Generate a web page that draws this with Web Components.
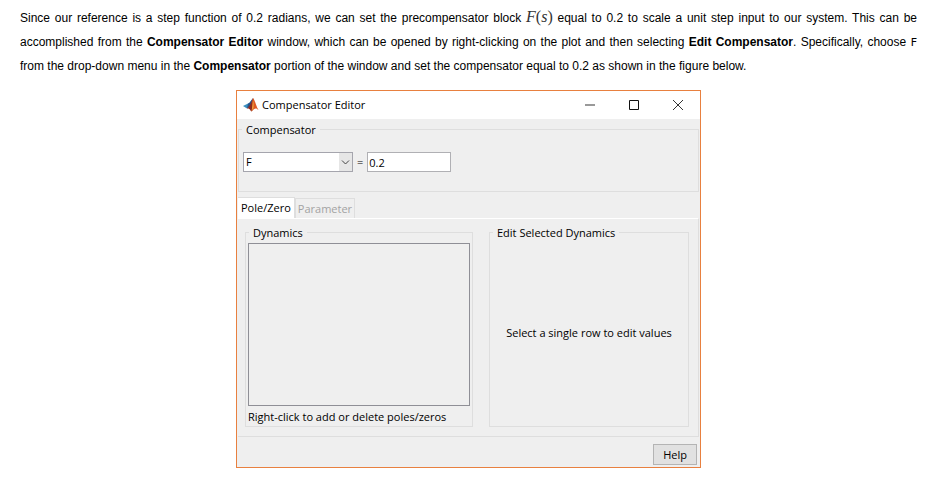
<!DOCTYPE html>
<html lang="en">
<head>
<meta charset="utf-8">
<title>Compensator Editor</title>
<style>
  body {
    margin: 0;
    padding: 6px 17px 24px 20px;
    background: #fff;
    color: #000;
    font-family: "Liberation Sans", Arial, sans-serif;
    font-size: 12px;
  }
</style>
</head>
<body>
<tutorial-text>
  Since our reference is a step function of 0.2 radians, we can set the precompensator block
  <math-term name="F" arg="s"></math-term>
  equal to 0.2 to scale a unit step input to our system. This can be accomplished from the
  <b>Compensator Editor</b> window, which can be opened by right-clicking on the plot and then
  selecting <b>Edit Compensator</b>. Specifically, choose <code-term>F</code-term> from the
  drop-down menu in the <b>Compensator</b> portion of the window and set the compensator equal
  to 0.2 as shown in the figure below.
</tutorial-text>

<app-window caption="Compensator Editor">
  <compensator-form></compensator-form>
  <tab-panel>
    <group-box label="Dynamics">
      <dynamics-list>Right-click to add or delete poles/zeros</dynamics-list>
    </group-box>
    <group-box label="Edit Selected Dynamics">
      <empty-message>Select a single row to edit values</empty-message>
    </group-box>
  </tab-panel>
  <push-button slot="footer">Help</push-button>
</app-window>

<script>
class BaseElement extends HTMLElement {
  constructor () {
    super()
    this.attachShadow({ mode: 'open' })
  }

  connectedCallback () {
    this.shadowRoot.innerHTML = this.template()
  }
}

class TutorialText extends BaseElement {
  template () {
    return `
      <style>
        :host { display: block; }
        p {
          margin: 0;
          line-height: 24px;
          text-align: justify;
        }
      </style>
      <p><slot></slot></p>
    `
  }
}

class MathTerm extends BaseElement {
  template () {
    return `
      <style>
        :host {
          font-family: "Liberation Serif", "Times New Roman", serif;
          font-size: 16px;
          line-height: 1;
          color: #333;
        }
      </style>
      <i>${this.getAttribute('name')}</i>(<i>${this.getAttribute('arg')}</i>)
    `.trim()
  }
}

class CodeTerm extends BaseElement {
  template () {
    return `
      <style>
        code {
          font-family: "DejaVu Sans Mono", Consolas, monospace;
          font-size: 11px;
          line-height: 1;
        }
      </style><code><slot></slot></code>`
  }
}

class AppWindow extends BaseElement {
  template () {
    return `
      <style>
        * { box-sizing: border-box; }
        :host {
          box-sizing: border-box;
          display: block;
          max-width: 465px;
          margin: 12px auto 0;
          border: 1px solid #e8803f;
          background: #efefef;
          font-family: "Open Sans", "Segoe UI", sans-serif;
          font-size: 11px;
          line-height: 16px;
        }
        header {
          display: flex;
          align-items: center;
          height: 28px;
          padding-left: 6px;
          background: #fff;
        }
        .logo {
          width: 16px;
          height: 16px;
          margin-right: 3px;
        }
        h1 {
          flex: 1;
          margin: 0;
          font-size: 11px;
          font-weight: normal;
        }
        header button {
          display: flex;
          align-items: center;
          justify-content: center;
          width: 44px;
          height: 28px;
          padding: 0;
          border: 0;
          background: none;
        }
        footer {
          display: flex;
          justify-content: flex-end;
          padding: 7px 3px 2px;
        }
        main { padding: 0 1px; }
      </style>
      <header>
        <svg class="logo" viewBox="0 0 16 16" aria-hidden="true">
          <path d="M0 9 5 6.500 7 8.500 4 11.500z" fill="#3a8fc0"/>
          <path d="M5 6.500C7 6 8 3 10 1L7.500 9.500 4 11.500z" fill="#26558c"/>
          <path d="M10 1C8.500 4 8 8 4 11.500 7 11 7.500 14 8.500 14.500 10 13 11 11 12 10z" fill="#8e2b20"/>
          <path d="M10 1C12 3 13 9 15.500 13 13 10.500 11.500 11 8.500 14.500 10 10 9.500 5 10 1z" fill="#de5a25"/>
          <path d="M9.800 3C10.800 5.500 10.800 8 10.500 11L8.500 14C9.500 10 9.500 6 9.800 3z" fill="#f2a33c"/>
        </svg>
        <h1>${this.getAttribute('caption')}</h1>
        <button type="button" aria-label="Minimize">
          <svg width="12" height="12" viewBox="0 0 12 12"><path d="M1 5h10v2H1z" fill="#999"/></svg>
        </button>
        <button type="button" aria-label="Maximize">
          <svg width="12" height="12" viewBox="0 0 12 12"><path d="M1.500 1.500h9v9h-9z" fill="none" stroke="#111"/></svg>
        </button>
        <button type="button" aria-label="Close">
          <svg width="12" height="12" viewBox="0 0 12 12"><path d="M1 1l10 10M11 1 1 11" fill="none" stroke="#333"/></svg>
        </button>
      </header>
      <main><slot></slot></main>
      <footer><slot name="footer"></slot></footer>
    `
  }
}

class GroupBox extends BaseElement {
  template () {
    return `
      <style>
        :host { display: flex; }
        fieldset {
          flex: 1;
          display: flex;
          box-sizing: border-box;
          min-width: 0;
          margin: 0;
          padding: 0 2px 1px;
          border: 1px solid #dedede;
        }
        legend {
          margin-left: 1px;
          padding: 2px 4px 0;
        }
      </style>
      <fieldset>
        <legend>${this.getAttribute('label')}</legend>
        <slot></slot>
      </fieldset>
    `
  }
}

class CompensatorForm extends BaseElement {
  template () {
    return `
      <style>
        :host { display: block; padding-top: 1px; }
        .row {
          display: flex;
          align-items: center;
          gap: 4px;
          padding: 14px 2px 18px;
        }
        .combo {
          display: grid;
          grid-template-columns: 1fr 13px;
          align-items: center;
          width: 110px;
          height: 20px;
          box-sizing: border-box;
          border: 1px solid #a5a5ad;
          background: #fff;
        }
        select, input {
          box-sizing: border-box;
          margin: 0;
          border-radius: 0;
          color: #000;
          background: #fff;
          font: inherit;
          appearance: none;
        }
        select {
          grid-area: 1 / 1 / 2 / 3;
          width: 100%;
          height: 18px;
          padding: 0 2px;
          border: 0;
        }
        .combo svg {
          grid-area: 1 / 2;
          z-index: 1;
          width: 13px;
          height: 18px;
          background: #e6e6e6;
          pointer-events: none;
        }
        input {
          width: 84px;
          height: 20px;
          padding: 0 1px;
          border: 1px solid #b0b0b4;
        }
      </style>
      <group-box label="Compensator">
        <div class="row">
          <div class="combo">
            <select aria-label="Compensator"><option>F</option><option>C</option></select>
            <svg viewBox="0 0 13 18"><path d="M3 7.500l3.500 3.500L10 7.500" fill="none" stroke="#444"/></svg>
          </div>
          <label for="value">=</label>
          <input id="value" type="text" value="0.2">
        </div>
      </group-box>
    `
  }
}

class TabPanel extends BaseElement {
  template () {
    return `
      <style>
        :host { display: block; padding-top: 5px; }
        nav {
          display: flex;
          align-items: flex-end;
        }
        button {
          box-sizing: border-box;
          height: 20px;
          margin: 0;
          padding: 0 2px;
          border: 1px solid #dedede;
          border-bottom: 0;
          background: #efefef;
          color: #a3a3a3;
          font: inherit;
        }
        button.active {
          height: 21px;
          padding: 0 3px;
          border-left: 0;
          background: #fff;
          color: #000;
        }
        section {
          display: grid;
          grid-template-columns: 228fr 200fr;
          gap: 16px;
          padding: 4px 9px 9px 7px;
          border: 1px solid #dedede;
          border-top: 1px solid #fff;
          border-left: 0;
        }
      </style>
      <nav role="tablist">
        <button type="button" role="tab" class="active" aria-selected="true">Pole/Zero</button>
        <button type="button" role="tab" aria-selected="false">Parameter</button>
      </nav>
      <section role="tabpanel"><slot></slot></section>
    `
  }
}

class DynamicsList extends BaseElement {
  template () {
    return `
      <style>
        :host {
          flex: 1;
          display: flex;
          flex-direction: column;
          gap: 3px;
        }
        .list {
          flex: 1;
          min-height: 161px;
          margin-top: 2px;
          border: 1px solid #8f8f96;
        }
      </style>
      <div class="list" role="listbox" aria-label="Dynamics"></div>
      <span><slot></slot></span>
    `
  }
}

class EmptyMessage extends BaseElement {
  template () {
    return `
      <style>
        :host {
          flex: 1;
          display: flex;
          align-items: center;
          justify-content: center;
        }
      </style>
      <span><slot></slot></span>
    `
  }
}

class PushButton extends BaseElement {
  template () {
    return `
      <style>
        button {
          display: block;
          box-sizing: border-box;
          height: 21px;
          padding: 0 9px;
          border: 1px solid #b4b4b4;
          border-radius: 0;
          background: #e1e1e1;
          color: #000;
          font: inherit;
        }
      </style>
      <button type="button"><slot></slot></button>
    `
  }
}

customElements.define('tutorial-text', TutorialText)
customElements.define('math-term', MathTerm)
customElements.define('code-term', CodeTerm)
customElements.define('app-window', AppWindow)
customElements.define('group-box', GroupBox)
customElements.define('compensator-form', CompensatorForm)
customElements.define('tab-panel', TabPanel)
customElements.define('dynamics-list', DynamicsList)
customElements.define('empty-message', EmptyMessage)
customElements.define('push-button', PushButton)
</script>
</body>
</html>
